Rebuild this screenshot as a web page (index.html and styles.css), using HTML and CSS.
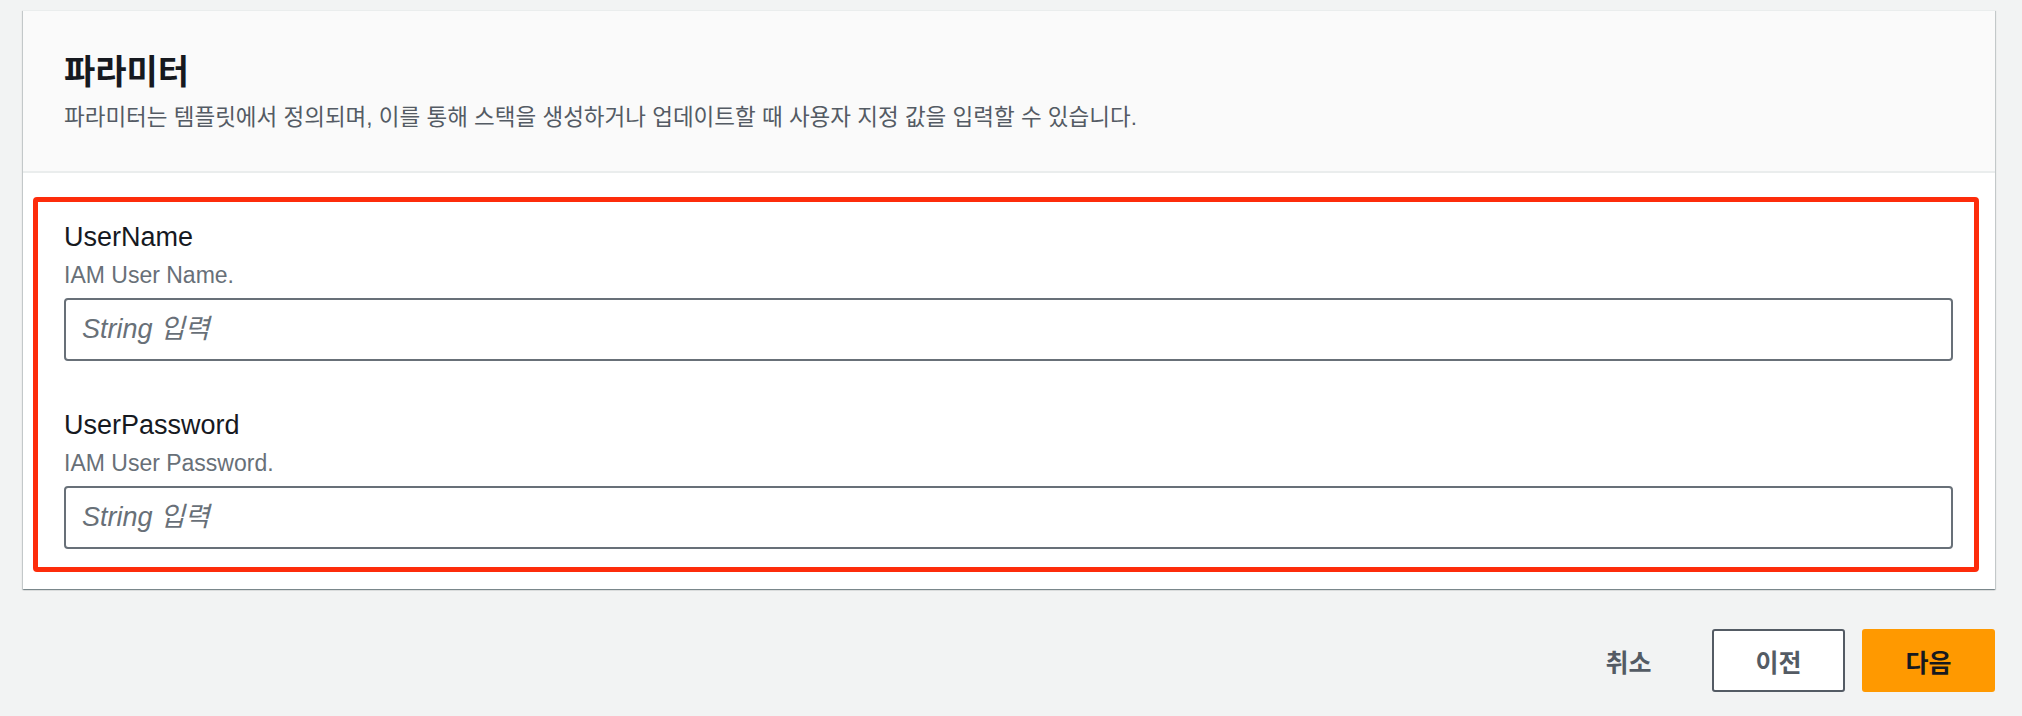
FILE: index.html
```html
<!DOCTYPE html>
<html lang="ko">

<head>
    <meta charset="UTF-8">
    <meta name="viewport" content="width=device-width, initial-scale=1.0">
    <title>파라미터</title>
    <link rel="stylesheet" href="styles.css">
</head>

<body>
    <div class="page">
        <div class="card">
            <div class="card-header">
                <h2 class="title">파라미터</h2>
                <p class="subtitle">파라미터는 템플릿에서 정의되며, 이를 통해 스택을 생성하거나 업데이트할 때 사용자 지정 값을 입력할 수 있습니다.</p>
            </div>
            <div class="card-body">
                <div class="highlight">
                    <div class="field">
                        <label class="label" for="userName">UserName</label>
                        <div class="hint">IAM User Name.</div>
                        <input type="text" id="userName" class="input1" placeholder="String 입력">
                    </div>
                    <div class="field">
                        <label class="label" for="userPassword">UserPassword</label>
                        <div class="hint">IAM User Password.</div>
                        <input type="text" id="userPassword" class="input1" placeholder="String 입력">
                    </div>
                </div>
            </div>
        </div>

        <div class="actions">
            <button class="btn btn-link">취소</button>
            <button class="btn btn-normal">이전</button>
            <button class="btn btn-primary">다음</button>
        </div>
    </div>
</body>

</html>
```

FILE: styles.css
```css
body {
    margin: 0;
    background-color: #f2f3f3;
    font-family: "Liberation Sans", "Noto Sans CJK KR", sans-serif;
    color: #16191f;
}

.page {
    padding: 10px 27px 0 23px;
}

.card {
    background-color: #fff;
    border-top: 1px solid #eaeded;
    box-shadow: 0 1px 1px 0 rgba(0, 28, 36, 0.3), 1px 1px 1px 0 rgba(0, 28, 36, 0.15), -1px 1px 1px 0 rgba(0, 28, 36, 0.15);
}

.card-header {
    background-color: #fafafa;
    border-bottom: 2px solid #eaeded;
    padding: 41px 20px 39px 41px;
}

.title {
    margin: 0;
    font-size: 34px;
    line-height: 40px;
    font-weight: bold;
}

.subtitle {
    margin: 12px 0 0;
    font-size: 22.5px;
    line-height: 28px;
    color: #545b64;
}

.card-body {
    padding: 24px 16px 17px 10px;
}

.highlight {
    border: 5px solid #fd2c0b;
    border-radius: 4px;
    padding: 19px 21px 18px 26px;
    display: flex;
    flex-direction: column;
    gap: 48px;
}

.field {
    display: flex;
    flex-direction: column;
}

.label {
    font-size: 27px;
    line-height: 32px;
}

.hint {
    margin-top: 8px;
    font-size: 23px;
    line-height: 28px;
    color: #687078;
}

input[type="text"] {
    margin-top: 9px;
    height: 63px;
    box-sizing: border-box;
    padding: 0 16px;
    border: 2px solid #687078;
    border-radius: 4px;
    font-family: inherit;
    font-size: 27px;
    color: #16191f;
    background-color: #fff;
}

input::placeholder {
    color: #687078;
    font-style: italic;
}

.actions {
    display: flex;
    justify-content: flex-end;
    gap: 17px;
    margin-top: 40px;
}

.btn {
    width: 133px;
    height: 63px;
    box-sizing: border-box;
    border: 2px solid transparent;
    border-radius: 3px;
    font-family: inherit;
    font-size: 25px;
    font-weight: bold;
    cursor: pointer;
}

.btn-link {
    background: none;
    color: #545b64;
}

.btn-normal {
    background-color: #fff;
    border-color: #545b64;
    color: #545b64;
}

.btn-primary {
    background-color: #ff9900;
    border-color: #ff9900;
    color: #16191f;
}
```
